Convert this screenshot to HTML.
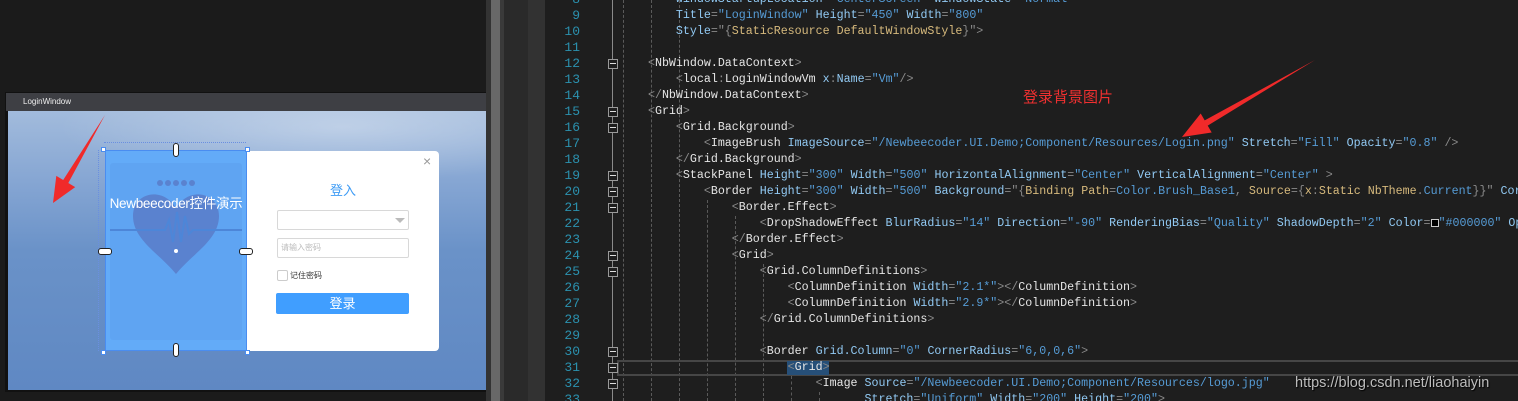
<!DOCTYPE html>
<html style="overflow:hidden;width:1518px;height:401px"><head><meta charset="utf-8"><style>
*{margin:0;padding:0;box-sizing:border-box}
body{width:1518px;height:401px;overflow:hidden;background:#1e1e1e;position:relative;font-family:"Liberation Sans","Noto Sans CJK SC",sans-serif}
.a{position:absolute}
.code{position:absolute;left:620px;white-space:pre;font-family:"Liberation Mono","Noto Sans CJK SC",monospace;font-size:11.65px;line-height:16px;height:16px;color:#e6e6e6}
.ln{position:absolute;left:548px;width:32px;text-align:right;font-family:"Liberation Mono",monospace;font-size:13px;line-height:16px;color:#2b91af}
.b{color:#8a8a8a}.n{color:#92caf4}.v{color:#569cd6}.y{color:#d7ba7d}
.fold{position:absolute;left:608px;width:10px;height:10px;border:1px solid #9a9a9a;background:#1e1e1e}
.fold:after{content:"";position:absolute;left:1px;top:3px;width:6px;height:1px;background:#ddd}
.g{position:absolute;top:0;height:401px;border-left:1px dashed #5a5a5a}
.h{position:absolute;width:5px;height:5px;background:#fff;border:1px solid #4a8df0}
</style></head><body>
<div class="a" style="left:0;top:0;width:486px;height:401px;background:#1b1b1b"></div>
<div class="a" style="left:486px;top:0;width:5px;height:401px;background:#333"></div>
<div class="a" style="left:491px;top:0;width:9px;height:401px;background:#686868"></div>
<div class="a" style="left:500px;top:0;width:4px;height:401px;background:#3a3a3a"></div>
<div class="a" style="left:504px;top:0;width:24px;height:401px;background:#2a2a2a"></div>
<div class="a" style="left:528px;top:0;width:17px;height:401px;background:#323232"></div>
<div class="a" style="left:5px;top:92px;width:481px;height:300px;background:#111"></div>
<div class="a" style="left:6px;top:93px;width:480px;height:18px;background:#3e3f44;color:#eee;font-size:8px;line-height:18px;padding-left:17px">LoginWindow</div>
<div class="a" style="left:8px;top:111px;width:478px;height:279px;background:linear-gradient(180deg,#a2bbdc 0%,#86a6d3 25%,#6a92c8 50%,#5f88c3 100%)"></div>
<div class="a" style="left:8px;top:111px;width:478px;height:80px;background:radial-gradient(ellipse at 70% 20%,rgba(255,255,255,.35),rgba(255,255,255,0) 60%)"></div>
<div class="a" style="left:105px;top:150px;width:142px;height:201px;background:#63abf8"></div>
<div class="a" style="left:110px;top:163px;width:132px;height:177px;background:#5fa4f2;border-radius:3px"></div>
<svg class="a" style="left:105px;top:150px" width="142" height="201">
<path d="M71 58 C58 36 28 42 28 66 C28 90 55 104 71 124 C87 104 114 90 114 66 C114 42 84 36 71 58Z" fill="#5a82cf"/>
<circle cx="55" cy="33" r="3" fill="#5a82cf"/><circle cx="63" cy="33" r="3" fill="#5a82cf"/><circle cx="71" cy="33" r="3" fill="#5a82cf"/><circle cx="79" cy="33" r="3" fill="#5a82cf"/><circle cx="87" cy="33" r="3" fill="#5a82cf"/>
<path d="M5 80 H60 L64 70 L68 92 L72 62 L76 92 L80 66 L84 84 L88 80 H137" stroke="#4d86d8" stroke-width="2" fill="none"/>
<circle cx="71" cy="101" r="2" fill="#fff"/>
<rect x="0.5" y="0.5" width="141" height="200" fill="none" stroke="#4a8df0"/>
</svg>
<div class="a" style="left:104px;top:192px;width:144px;text-align:center;color:#fff;font-size:13.5px;letter-spacing:-.3px;white-space:nowrap">Newbeecoder控件演示</div>
<div class="a" style="left:247px;top:151px;width:192px;height:200px;background:#fff;border-radius:0 4px 4px 0"></div>
<div class="a" style="left:423px;top:153px;color:#999;font-size:14px">×</div>
<div class="a" style="left:247px;top:180px;width:192px;text-align:center;color:#3f9cf5;font-size:13px">登入</div>
<div class="a" style="left:277px;top:210px;width:132px;height:20px;border:1px solid #d8d8d8;border-radius:2px"></div>
<div class="a" style="left:395px;top:218px;width:0;height:0;border-left:5px solid transparent;border-right:5px solid transparent;border-top:5px solid #bbb"></div>
<div class="a" style="left:277px;top:238px;width:132px;height:20px;border:1px solid #d8d8d8;border-radius:2px;color:#bbb;font-size:8px;line-height:18px;padding-left:3px">请输入密码</div>
<div class="a" style="left:277px;top:270px;width:11px;height:11px;border:1px solid #ccc;border-radius:2px"></div>
<div class="a" style="left:290px;top:270px;color:#333;font-size:8px;line-height:11px">记住密码</div>
<div class="a" style="left:276px;top:293px;width:133px;height:21px;background:#409eff;border-radius:2px;color:#fff;font-size:13px;line-height:21px;text-align:center">登录</div>
<div class="a" style="left:104px;top:142px;width:142px;border-top:1px dotted #6a8fe0"></div>
<div class="a" style="left:98px;top:150px;height:201px;border-left:1px dotted #6a8fe0"></div>
<div class="h" style="left:101px;top:147px"></div><div class="h" style="left:245px;top:147px"></div>
<div class="h" style="left:101px;top:350px"></div><div class="h" style="left:245px;top:350px"></div>
<div class="a" style="left:173px;top:143px;width:6px;height:14px;border:1.5px solid #222;background:#fff;border-radius:3px"></div>
<div class="a" style="left:173px;top:343px;width:6px;height:14px;border:1.5px solid #222;background:#fff;border-radius:3px"></div>
<div class="a" style="left:98px;top:248px;width:14px;height:7px;border:1.5px solid #222;background:#fff;border-radius:3px"></div>
<div class="a" style="left:239px;top:248px;width:14px;height:7px;border:1.5px solid #222;background:#fff;border-radius:3px"></div>
<div class="a" style="left:612px;top:0;width:1px;height:401px;background:#8a8a8a"></div>
<div class="g" style="left:623px"></div><div class="g" style="left:651px"></div><div class="g" style="left:679px"></div><div class="g" style="left:707px;top:200px;height:201px"></div><div class="g" style="left:735px;top:216px;height:185px"></div><div class="g" style="left:763px;top:264px;height:137px"></div><div class="g" style="left:791px;top:376px;height:25px"></div><div class="g" style="left:819px;top:392px;height:9px"></div>
<div class="a" style="left:617px;top:360px;width:901px;height:16px;border:2px solid #464646;border-right:none"></div>
<div class="a" style="left:787px;top:361px;width:42px;height:14px;background:#264f78"></div>
<div class="ln" style="top:-8px">8</div><div class="ln" style="top:8px">9</div><div class="ln" style="top:24px">10</div><div class="ln" style="top:40px">11</div><div class="ln" style="top:56px">12</div><div class="ln" style="top:72px">13</div><div class="ln" style="top:88px">14</div><div class="ln" style="top:104px">15</div><div class="ln" style="top:120px">16</div><div class="ln" style="top:136px">17</div><div class="ln" style="top:152px">18</div><div class="ln" style="top:168px">19</div><div class="ln" style="top:184px">20</div><div class="ln" style="top:200px">21</div><div class="ln" style="top:216px">22</div><div class="ln" style="top:232px">23</div><div class="ln" style="top:248px">24</div><div class="ln" style="top:264px">25</div><div class="ln" style="top:280px">26</div><div class="ln" style="top:296px">27</div><div class="ln" style="top:312px">28</div><div class="ln" style="top:328px">29</div><div class="ln" style="top:344px">30</div><div class="ln" style="top:360px">31</div><div class="ln" style="top:376px">32</div><div class="ln" style="top:392px;height:9px;overflow:hidden">33</div>
<div class="fold" style="top:59px"></div><div class="fold" style="top:107px"></div><div class="fold" style="top:123px"></div><div class="fold" style="top:171px"></div><div class="fold" style="top:187px"></div><div class="fold" style="top:203px"></div><div class="fold" style="top:251px"></div><div class="fold" style="top:267px"></div><div class="fold" style="top:347px"></div><div class="fold" style="top:363px"></div><div class="fold" style="top:379px"></div>
<div class="code" style="top:-8px">        <span class="n">WindowStartupLocation</span><span class="b">=</span><span class="v">"CenterScreen"</span> <span class="n">WindowState</span><span class="b">=</span><span class="v">"Normal"</span></div>
<div class="code" style="top:8px">        <span class="n">Title</span><span class="b">=</span><span class="v">"LoginWindow"</span> <span class="n">Height</span><span class="b">=</span><span class="v">"450"</span> <span class="n">Width</span><span class="b">=</span><span class="v">"800"</span></div>
<div class="code" style="top:24px">        <span class="n">Style</span><span class="b">="{</span><span class="y">StaticResource DefaultWindowStyle</span><span class="b">}"&gt;</span></div>
<div class="code" style="top:56px">    <span class="b">&lt;</span>NbWindow.DataContext<span class="b">&gt;</span></div>
<div class="code" style="top:72px">        <span class="b">&lt;</span>local<span class="b">:</span>LoginWindowVm <span class="n">x</span><span class="b">:</span><span class="n">Name</span><span class="b">=</span><span class="v">"Vm"</span><span class="b">/&gt;</span></div>
<div class="code" style="top:88px">    <span class="b">&lt;/</span>NbWindow.DataContext<span class="b">&gt;</span></div>
<div class="code" style="top:104px">    <span class="b">&lt;</span>Grid<span class="b">&gt;</span></div>
<div class="code" style="top:120px">        <span class="b">&lt;</span>Grid.Background<span class="b">&gt;</span></div>
<div class="code" style="top:136px">            <span class="b">&lt;</span>ImageBrush <span class="n">ImageSource</span><span class="b">=</span><span class="v">"/Newbeecoder.UI.Demo;Component/Resources/Login.png"</span> <span class="n">Stretch</span><span class="b">=</span><span class="v">"Fill"</span> <span class="n">Opacity</span><span class="b">=</span><span class="v">"0.8"</span> <span class="b">/&gt;</span></div>
<div class="code" style="top:152px">        <span class="b">&lt;/</span>Grid.Background<span class="b">&gt;</span></div>
<div class="code" style="top:168px">        <span class="b">&lt;</span>StackPanel <span class="n">Height</span><span class="b">=</span><span class="v">"300"</span> <span class="n">Width</span><span class="b">=</span><span class="v">"500"</span> <span class="n">HorizontalAlignment</span><span class="b">=</span><span class="v">"Center"</span> <span class="n">VerticalAlignment</span><span class="b">=</span><span class="v">"Center"</span> <span class="b">&gt;</span></div>
<div class="code" style="top:184px">            <span class="b">&lt;</span>Border <span class="n">Height</span><span class="b">=</span><span class="v">"300"</span> <span class="n">Width</span><span class="b">=</span><span class="v">"500"</span> <span class="n">Background</span><span class="b">="{</span><span class="y">Binding</span> <span class="y">Path</span><span class="b">=</span><span class="v">Color.Brush_Base1</span><span class="b">,</span> <span class="y">Source</span><span class="b">={</span><span class="y">x</span><span class="b">:</span><span class="y">Static NbTheme</span><span class="b">.</span><span class="v">Current</span><span class="b">}}"</span> <span class="n">CornerRadius</span></div>
<div class="code" style="top:200px">                <span class="b">&lt;</span>Border.Effect<span class="b">&gt;</span></div>
<div class="code" style="top:216px">                    <span class="b">&lt;</span>DropShadowEffect <span class="n">BlurRadius</span><span class="b">=</span><span class="v">"14"</span> <span class="n">Direction</span><span class="b">=</span><span class="v">"-90"</span> <span class="n">RenderingBias</span><span class="b">=</span><span class="v">"Quality"</span> <span class="n">ShadowDepth</span><span class="b">=</span><span class="v">"2"</span> <span class="n">Color</span><span class="b">=</span><span style="display:inline-block;width:8px;height:8px;background:#000;border:1px solid #ccc;vertical-align:-1px"></span><span class="v">"#000000"</span> <span class="n">Opacity</span></div>
<div class="code" style="top:232px">                <span class="b">&lt;/</span>Border.Effect<span class="b">&gt;</span></div>
<div class="code" style="top:248px">                <span class="b">&lt;</span>Grid<span class="b">&gt;</span></div>
<div class="code" style="top:264px">                    <span class="b">&lt;</span>Grid.ColumnDefinitions<span class="b">&gt;</span></div>
<div class="code" style="top:280px">                        <span class="b">&lt;</span>ColumnDefinition <span class="n">Width</span><span class="b">=</span><span class="v">"2.1*"</span><span class="b">&gt;&lt;/</span>ColumnDefinition<span class="b">&gt;</span></div>
<div class="code" style="top:296px">                        <span class="b">&lt;</span>ColumnDefinition <span class="n">Width</span><span class="b">=</span><span class="v">"2.9*"</span><span class="b">&gt;&lt;/</span>ColumnDefinition<span class="b">&gt;</span></div>
<div class="code" style="top:312px">                    <span class="b">&lt;/</span>Grid.ColumnDefinitions<span class="b">&gt;</span></div>
<div class="code" style="top:344px">                    <span class="b">&lt;</span>Border <span class="n">Grid.Column</span><span class="b">=</span><span class="v">"0"</span> <span class="n">CornerRadius</span><span class="b">=</span><span class="v">"6,0,0,6"</span><span class="b">&gt;</span></div>
<div class="code" style="top:360px">                        <span class="b">&lt;</span>Grid<span class="b">&gt;</span></div>
<div class="code" style="top:376px">                            <span class="b">&lt;</span>Image <span class="n">Source</span><span class="b">=</span><span class="v">"/Newbeecoder.UI.Demo;Component/Resources/logo.jpg"</span></div>
<div class="code" style="top:392px;height:9px;overflow:hidden">                                   <span class="n">Stretch</span><span class="b">=</span><span class="v">"Uniform"</span> <span class="n">Width</span><span class="b">=</span><span class="v">"200"</span> <span class="n">Height</span><span class="b">=</span><span class="v">"200"</span><span class="b">&gt;</span></div>
<div class="a" style="left:1023px;top:88px;color:#f03030;font-size:15px;line-height:20px">登录背景图片</div>
<svg class="a" style="left:0;top:0" width="1518" height="401">
<polygon points="105,115 68.3,183 75.2,187.1 53,203 56.3,175.9 63.2,180" fill="#f02a2a"/>
<polygon points="1315,60 1207.7,125.6 1211.7,132.5 1182,137 1200.7,113.5 1204.7,120.4" fill="#f02a2a"/>
</svg>
<div class="a" style="left:1295px;top:374px;color:#bdbdbd;font-size:14.5px;line-height:18px;text-shadow:1px 1px 1px #000">https://blog.csdn.net/liaohaiyin</div>
</body></html>
